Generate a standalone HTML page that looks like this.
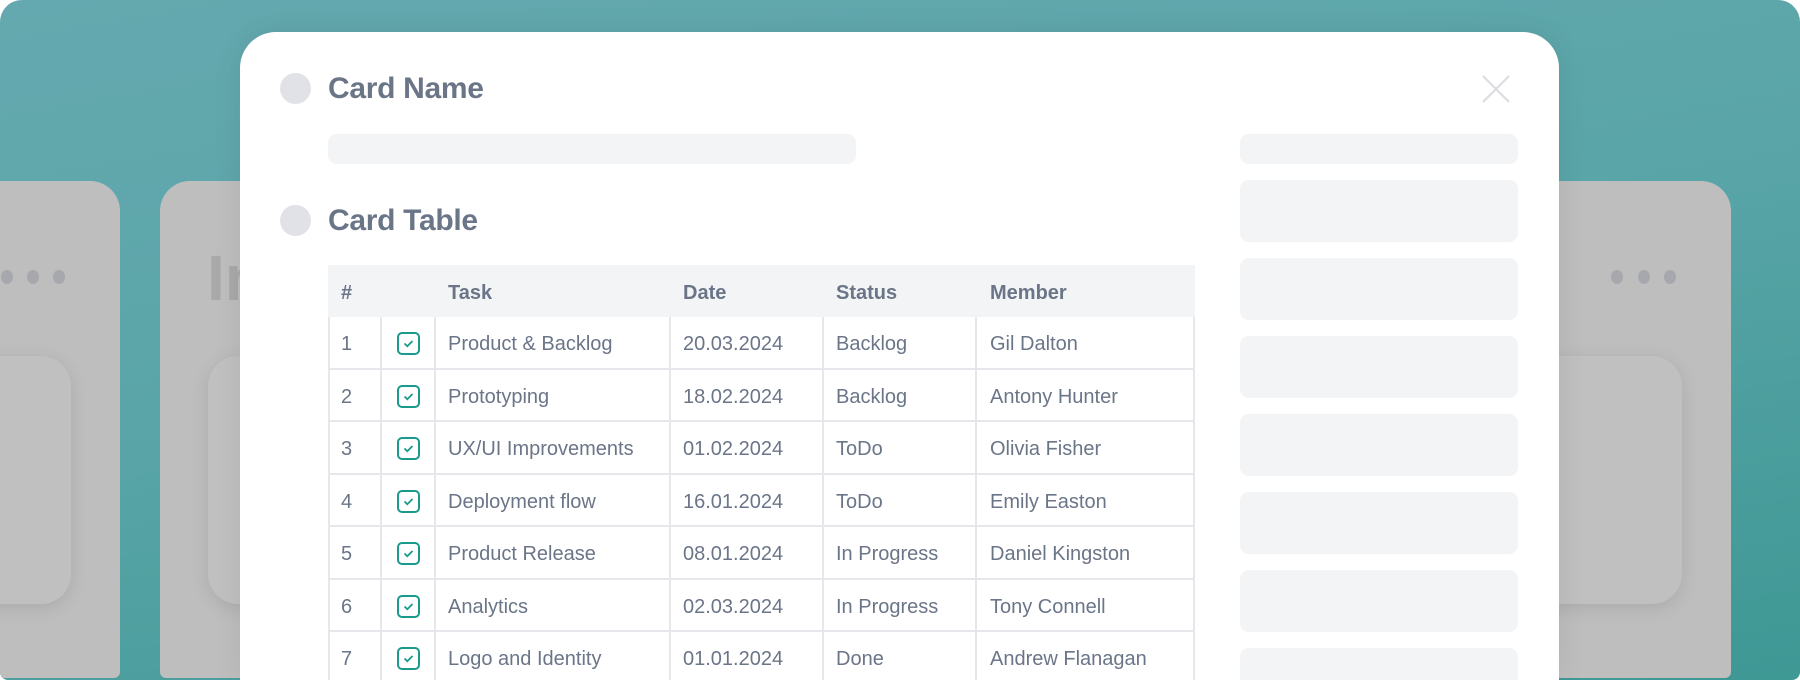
<!DOCTYPE html>
<html style="overflow:hidden;height:680px"><head><meta charset="utf-8"><style>
*{margin:0;padding:0;box-sizing:border-box}
body{width:1800px;height:680px;overflow:hidden;background:#fff;font-family:"Liberation Sans",sans-serif;position:relative}
.bg{position:absolute;left:0;top:0;width:1800px;height:680px;border-radius:22px 22px 8px 8px;background:linear-gradient(170deg,#64a9af 0%,#5aa5a8 45%,#3e9894 100%);overflow:hidden}
.card{position:absolute;background:#bebebe;border-radius:30px 30px 6px 6px;top:181px;height:497px;overflow:hidden}
.inner{position:absolute;background:#c0c0c0;border-radius:30px;box-shadow:0 4px 18px rgba(0,0,0,.10)}
.dot{position:absolute;width:12px;height:14px;border-radius:50%;background:#a6a8ad;top:270px}
.modal{position:absolute;left:240px;top:32px;width:1319px;height:648px;background:#fff;border-radius:36px 36px 0 0;box-shadow:0 0 30px rgba(0,0,0,.08)}
.circ{position:absolute;width:31px;height:31px;border-radius:50%;background:#e1e2e8}
.h{position:absolute;font-size:30px;font-weight:bold;color:#6b7588;letter-spacing:-0.3px}
.bar{position:absolute;background:#f3f4f6;border-radius:9px}
.tbl{position:absolute;left:328px;top:265px;width:867px}
.hd{height:52px;background:#f3f4f6;position:relative}
.hd span{position:absolute;top:17px;font-size:20px;font-weight:bold;color:#6b7588}
.row{height:52.5px;position:relative;border-bottom:2px solid #e6e7eb}
.row div{position:absolute;top:0;height:100%;border-left:2px solid #e6e7eb}
.row span{position:absolute;top:16px;font-size:20px;color:#6b7588}
.cb{position:absolute;left:69px;top:15px;width:23px;height:23px;border:2px solid #1a9a8a;border-radius:5px}
</style></head><body>
<div class="bg">
  <div class="card" style="left:-40px;width:160px">
    <div class="inner" style="left:0;top:175px;width:111px;height:248px"></div>
  </div>
  <div class="dot" style="left:1px"></div><div class="dot" style="left:27px"></div><div class="dot" style="left:53px"></div>
  <div class="card" style="left:160px;width:200px">
    <div style="position:absolute;left:47px;top:60px;font-size:64px;font-weight:bold;color:#a9a9a9">In</div>
    <div class="inner" style="left:48px;top:175px;width:200px;height:248px"></div>
  </div>
  <div class="card" style="left:1500px;width:231px">
    <div class="inner" style="left:-20px;top:175px;width:202px;height:248px"></div>
  </div>
  <div class="dot" style="left:1611px"></div><div class="dot" style="left:1638px"></div><div class="dot" style="left:1664px"></div>
</div>
<div class="modal"></div>
<div class="circ" style="left:280px;top:73px"></div>
<div class="h" style="left:328px;top:72px">Card Name</div>
<div class="bar" style="left:328px;top:134px;width:528px;height:30px"></div>
<div class="circ" style="left:280px;top:205px"></div>
<div class="h" style="left:328px;top:204px">Card Table</div>
<svg style="position:absolute;left:1482px;top:75px" width="28" height="28" viewBox="0 0 28 28"><path d="M1 1L27 27M27 1L1 27" stroke="#dcdde2" stroke-width="2.2" fill="none"/></svg>
<div class="bar" style="left:1240px;top:134px;width:278px;height:30px"></div>
<div class="bar" style="left:1240px;top:180px;width:278px;height:62px"></div>
<div class="bar" style="left:1240px;top:258px;width:278px;height:62px"></div>
<div class="bar" style="left:1240px;top:336px;width:278px;height:62px"></div>
<div class="bar" style="left:1240px;top:414px;width:278px;height:62px"></div>
<div class="bar" style="left:1240px;top:492px;width:278px;height:62px"></div>
<div class="bar" style="left:1240px;top:570px;width:278px;height:62px"></div>
<div class="bar" style="left:1240px;top:648px;width:278px;height:32px;border-radius:9px 9px 0 0"></div>
<div class="tbl">
  <div class="hd"><span style="left:13px">#</span><span style="left:120px">Task</span><span style="left:355px">Date</span><span style="left:508px">Status</span><span style="left:662px">Member</span></div>
  <div class="row"><div style="left:0"></div><div style="left:52px"></div><div style="left:106px"></div><div style="left:341px"></div><div style="left:494px"></div><div style="left:647px"></div><div style="left:865px"></div><span style="left:13px">1</span><i class="cb"><svg width="19" height="19" viewBox="0 0 19 19" style="position:absolute;left:0;top:0"><path d="M5.5 9.5L8.3 12.2L13.5 7" stroke="#1a9a8a" stroke-width="1.8" fill="none"/></svg></i><span style="left:120px">Product &amp; Backlog</span><span style="left:355px">20.03.2024</span><span style="left:508px">Backlog</span><span style="left:662px">Gil Dalton</span></div>
  <div class="row"><div style="left:0"></div><div style="left:52px"></div><div style="left:106px"></div><div style="left:341px"></div><div style="left:494px"></div><div style="left:647px"></div><div style="left:865px"></div><span style="left:13px">2</span><i class="cb"><svg width="19" height="19" viewBox="0 0 19 19" style="position:absolute;left:0;top:0"><path d="M5.5 9.5L8.3 12.2L13.5 7" stroke="#1a9a8a" stroke-width="1.8" fill="none"/></svg></i><span style="left:120px">Prototyping</span><span style="left:355px">18.02.2024</span><span style="left:508px">Backlog</span><span style="left:662px">Antony Hunter</span></div>
  <div class="row"><div style="left:0"></div><div style="left:52px"></div><div style="left:106px"></div><div style="left:341px"></div><div style="left:494px"></div><div style="left:647px"></div><div style="left:865px"></div><span style="left:13px">3</span><i class="cb"><svg width="19" height="19" viewBox="0 0 19 19" style="position:absolute;left:0;top:0"><path d="M5.5 9.5L8.3 12.2L13.5 7" stroke="#1a9a8a" stroke-width="1.8" fill="none"/></svg></i><span style="left:120px">UX/UI Improvements</span><span style="left:355px">01.02.2024</span><span style="left:508px">ToDo</span><span style="left:662px">Olivia Fisher</span></div>
  <div class="row"><div style="left:0"></div><div style="left:52px"></div><div style="left:106px"></div><div style="left:341px"></div><div style="left:494px"></div><div style="left:647px"></div><div style="left:865px"></div><span style="left:13px">4</span><i class="cb"><svg width="19" height="19" viewBox="0 0 19 19" style="position:absolute;left:0;top:0"><path d="M5.5 9.5L8.3 12.2L13.5 7" stroke="#1a9a8a" stroke-width="1.8" fill="none"/></svg></i><span style="left:120px">Deployment flow</span><span style="left:355px">16.01.2024</span><span style="left:508px">ToDo</span><span style="left:662px">Emily Easton</span></div>
  <div class="row"><div style="left:0"></div><div style="left:52px"></div><div style="left:106px"></div><div style="left:341px"></div><div style="left:494px"></div><div style="left:647px"></div><div style="left:865px"></div><span style="left:13px">5</span><i class="cb"><svg width="19" height="19" viewBox="0 0 19 19" style="position:absolute;left:0;top:0"><path d="M5.5 9.5L8.3 12.2L13.5 7" stroke="#1a9a8a" stroke-width="1.8" fill="none"/></svg></i><span style="left:120px">Product Release</span><span style="left:355px">08.01.2024</span><span style="left:508px">In Progress</span><span style="left:662px">Daniel Kingston</span></div>
  <div class="row"><div style="left:0"></div><div style="left:52px"></div><div style="left:106px"></div><div style="left:341px"></div><div style="left:494px"></div><div style="left:647px"></div><div style="left:865px"></div><span style="left:13px">6</span><i class="cb"><svg width="19" height="19" viewBox="0 0 19 19" style="position:absolute;left:0;top:0"><path d="M5.5 9.5L8.3 12.2L13.5 7" stroke="#1a9a8a" stroke-width="1.8" fill="none"/></svg></i><span style="left:120px">Analytics</span><span style="left:355px">02.03.2024</span><span style="left:508px">In Progress</span><span style="left:662px">Tony Connell</span></div>
  <div class="row"><div style="left:0"></div><div style="left:52px"></div><div style="left:106px"></div><div style="left:341px"></div><div style="left:494px"></div><div style="left:647px"></div><div style="left:865px"></div><span style="left:13px">7</span><i class="cb"><svg width="19" height="19" viewBox="0 0 19 19" style="position:absolute;left:0;top:0"><path d="M5.5 9.5L8.3 12.2L13.5 7" stroke="#1a9a8a" stroke-width="1.8" fill="none"/></svg></i><span style="left:120px">Logo and Identity</span><span style="left:355px">01.01.2024</span><span style="left:508px">Done</span><span style="left:662px">Andrew Flanagan</span></div>
</div>
</body></html>
